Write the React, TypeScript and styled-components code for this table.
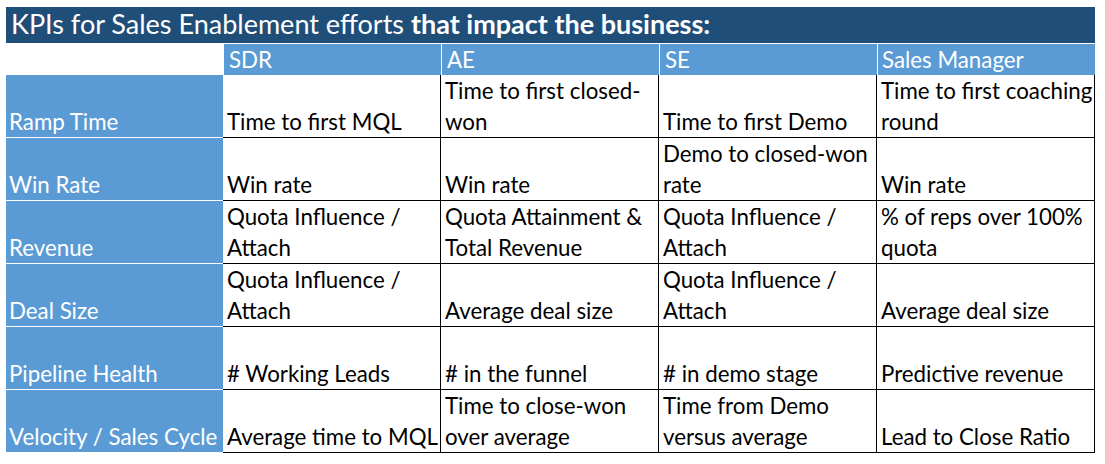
import React from 'react';
import styled, { createGlobalStyle } from 'styled-components';

const GlobalStyle = createGlobalStyle`
  html, body {
    margin: 0;
    padding: 0;
    background: #ffffff;
  }
  body {
    font-family: Lato, "Open Sans", "Liberation Sans", sans-serif;
  }
`;

const roles = ['SDR', 'AE', 'SE', 'Sales Manager'];

interface KpiRow {
  label: string;
  cells: string[][];
}

const rows: KpiRow[] = [
  {
    label: 'Ramp Time',
    cells: [
      ['Time to first MQL'],
      ['Time to first closed-', 'won'],
      ['Time to first Demo'],
      ['Time to first coaching', 'round'],
    ],
  },
  {
    label: 'Win Rate',
    cells: [['Win rate'], ['Win rate'], ['Demo to closed-won', 'rate'], ['Win rate']],
  },
  {
    label: 'Revenue',
    cells: [
      ['Quota Influence /', 'Attach'],
      ['Quota Attainment &', 'Total Revenue'],
      ['Quota Influence /', 'Attach'],
      ['% of reps over 100%', 'quota'],
    ],
  },
  {
    label: 'Deal Size',
    cells: [
      ['Quota Influence /', 'Attach'],
      ['Average deal size'],
      ['Quota Influence /', 'Attach'],
      ['Average deal size'],
    ],
  },
  {
    label: 'Pipeline Health',
    cells: [['# Working Leads'], ['# in the funnel'], ['# in demo stage'], ['Predictive revenue']],
  },
  {
    label: 'Velocity / Sales Cycle',
    cells: [
      ['Average time to MQL'],
      ['Time to close-won', 'over average'],
      ['Time from Demo', 'versus average'],
      ['Lead to Close Ratio'],
    ],
  },
];

export default function App() {
  return (
    <Page>
      <GlobalStyle />
      <Sheet>
        <TitleBar>
          KPIs for Sales Enablement efforts <strong>that impact the business:</strong>
        </TitleBar>
        <Grid>
          <Corner />
          {roles.map((role, i) => (
            <HeaderCell key={role} last={i === roles.length - 1}>
              {role}
            </HeaderCell>
          ))}
          {rows.map((row) => (
            <React.Fragment key={row.label}>
              <LabelCell>
                <Line>{row.label}</Line>
              </LabelCell>
              {row.cells.map((lines, i) => (
                <DataCell key={i}>
                  {lines.map((line) => (
                    <Line key={line}>{line}</Line>
                  ))}
                </DataCell>
              ))}
            </React.Fragment>
          ))}
        </Grid>
      </Sheet>
    </Page>
  );
}

// Styling
const Page = styled.div`
  width: 1105px;
  height: 464px;
  padding: 7px 0 0 6px;
  box-sizing: border-box;
  background: #ffffff;
`;

const Sheet = styled.div`
  width: 1089px;
  display: flex;
  flex-direction: column;
`;

const TitleBar = styled.div`
  height: 36px;
  background: #1f4e79;
  color: #ffffff;
  font-size: 27px;
  line-height: 33px;
  padding-left: 5px;
  white-space: nowrap;
  border-bottom: 1px solid #ffffff;
  overflow: hidden;

  strong {
    font-weight: 700;
  }
`;

const Grid = styled.div`
  display: grid;
  grid-template-columns: 217px 218px 218px 218px 218px;
  grid-template-rows: 31px repeat(6, 63px);
  font-size: 22.3px;
`;

const Corner = styled.div`
  background: #ffffff;
`;

const HeaderCell = styled.div<{ last: boolean }>`
  background: #5b9bd5;
  color: #ffffff;
  line-height: 31px;
  padding-left: ${({ last }) => (last ? 4 : 5)}px;
  border-left: 1px solid #ffffff;
  white-space: nowrap;
`;

const LabelCell = styled.div`
  background: #5b9bd5;
  color: #ffffff;
  padding-left: 3px;
  display: flex;
  flex-direction: column;
  justify-content: flex-end;
  border-bottom: 1px solid #ffffff;
  box-sizing: border-box;
`;

const DataCell = styled.div`
  color: #000000;
  padding-left: 4px;
  display: flex;
  flex-direction: column;
  justify-content: flex-end;
  border-right: 1px solid #000000;
  border-bottom: 1px solid #000000;
  box-sizing: border-box;
`;

const Line = styled.div`
  line-height: 31px;
  white-space: nowrap;
`;
